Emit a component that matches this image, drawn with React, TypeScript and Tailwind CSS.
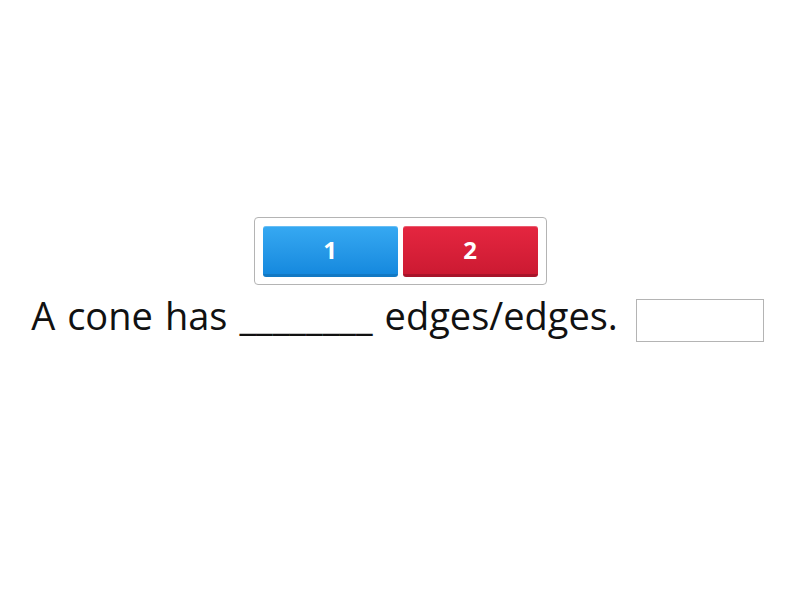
const words = ["A", "cone", "has", "________", "edges/edges."];

export default function App() {
  return (
    <div
      className="flex h-[600px] w-[800px] flex-col items-center bg-white pt-[217px]"
      style={{ fontFamily: '"Open Sans", sans-serif' }}
    >
      {/* answer tiles */}
      <div className="flex gap-[5px] rounded-[4px] border border-[#b4b4b4] px-[8px] pb-[7px] pt-[8px]">
        <button className="flex h-[51px] w-[135px] items-center justify-center rounded-[3px] border-b-[3px] border-[#1279c4] bg-gradient-to-b from-[#36a9f2] to-[#1589de] text-[24px] font-bold text-white shadow-[inset_0_1px_0_rgba(255,255,255,0.25)]">
          1
        </button>
        <button className="flex h-[51px] w-[135px] items-center justify-center rounded-[3px] border-b-[3px] border-[#a8142a] bg-gradient-to-b from-[#e52640] to-[#cc1a32] text-[24px] font-bold text-white shadow-[inset_0_1px_0_rgba(255,255,255,0.25)]">
          2
        </button>
      </div>

      {/* sentence */}
      <div className="mr-[5px] mt-[8px] flex items-start">
        <p className="flex gap-[12px] text-[38px] leading-[44px] text-[#111]">
          {words.map((w, i) => (
            <span key={i}>{w}</span>
          ))}
        </p>
        <div className="ml-[18px] mt-[6px] h-[43px] w-[128px] border border-[#b4b4b4] bg-white" />
      </div>
    </div>
  );
}
